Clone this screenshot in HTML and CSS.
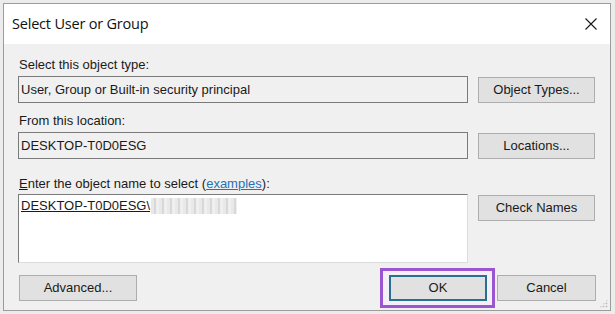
FILE: index.html
```html
<!DOCTYPE html>
<html>
<head>
<meta charset="utf-8">
<link rel="stylesheet" href="styles.css">
</head>
<body>
<div class="window">
  <div class="titlebar">
    <span class="title">Select User or Group</span>
    <svg class="close" width="12" height="12" viewBox="0 0 12 12"><path d="M0.5 0.5 L11.5 11.5 M11.5 0.5 L0.5 11.5" stroke="#1a1a1a" stroke-width="1.1" fill="none"/></svg>
  </div>
  <div class="content">
    <div class="label first">Select this object type:</div>
    <div class="row">
      <div class="field">User, Group or Built-in security principal</div>
      <div class="btn">Object Types...</div>
    </div>
    <div class="label second">From this location:</div>
    <div class="row">
      <div class="field">DESKTOP-T0D0ESG</div>
      <div class="btn">Locations...</div>
    </div>
    <div class="label third"><u>E</u>nter the object name to select (<a class="link">examples</a>):</div>
    <div class="row">
      <div class="area"><span class="uname">DESKTOP-T0D0ESG\</span><span class="blur"></span></div>
      <div class="btn">Check Names</div>
    </div>
    <div class="bottom">
      <div class="btn adv">Advanced...</div>
      <div class="right">
        <div class="hl"><div class="btn ok">OK</div></div>
        <div class="btn cancel">Cancel</div>
      </div>
    </div>
    <div class="grip"></div>
  </div>
</div>
</body>
</html>
```
FILE: styles.css
```css
html, body {
  margin: 0;
  padding: 0;
}
body {
  width: 615px;
  height: 314px;
  overflow: hidden;
  background: #ececec;
  font-family: "Liberation Sans", Arial, sans-serif;
  font-size: 13px;
  color: #1a1a1a;
}
.window {
  margin: 3px 0 0 3px;
  width: 606px;
  border: 1px solid #9c9c9c;
  background: #f0f0f0;
  position: relative;
}
.titlebar {
  height: 40px;
  background: #ffffff;
  display: flex;
  align-items: center;
  justify-content: space-between;
  padding: 0 13px 0 8px;
}
.title {
  font-family: "Open Sans", "Noto Sans", sans-serif;
  font-size: 14.5px;
  color: #111;
  letter-spacing: -0.2px;
  margin-top: -2px;
}
.close {
  margin-top: -1px;
}
.content {
  box-sizing: border-box;
  padding: 13px 14px 0 14px;
  height: 266px;
  position: relative;
}
.label {
  padding-left: 1px;
  height: 15px;
  line-height: 15px;
}
.label.first {
  margin: 0 0 4px 0;
}
.label.second {
  margin: 10px 0 4px 0;
}
.label.third {
  margin: 17px 0 3px 0;
}
.row {
  display: grid;
  grid-template-columns: 450px 117px;
  column-gap: 10px;
  align-items: start;
}
.field {
  box-sizing: border-box;
  height: 27px;
  border: 1px solid #7a7a7a;
  background: #f0f0f0;
  line-height: 25px;
  padding-left: 2px;
}
.btn {
  box-sizing: border-box;
  height: 26px;
  border: 1px solid #adadad;
  background: #e1e1e1;
  text-align: center;
  line-height: 24px;
  margin-top: 1px;
}
.area {
  box-sizing: border-box;
  height: 69px;
  border: 1px solid #7a7a7a;
  border-right-color: #dcdcdc;
  border-bottom-color: #dcdcdc;
  background: #ffffff;
  padding: 3px 0 0 2px;
  display: flex;
  align-items: flex-start;
  line-height: 15px;
}
.uname {
  text-decoration: underline;
}
.blur {
  display: inline-block;
  width: 86px;
  height: 16px;
  margin-left: 1px;
  background: repeating-linear-gradient(90deg, #e9e9e9 0 3px, #d8d8d8 3px 5px, #efefef 5px 8px);
}
.link {
  color: #2a6fb5;
  text-decoration: underline;
}
.bottom {
  display: flex;
  justify-content: space-between;
  align-items: center;
  margin-top: 5px;
}
.adv {
  width: 118px;
  margin-left: 1px;
  margin-top: 0;
}
.right {
  display: flex;
  align-items: center;
  gap: 2px;
}
.hl {
  box-sizing: border-box;
  border: 3px solid #9a55d0;
  padding: 4px 5px 4px 6px;
  background: #f5effa;
}
.ok {
  width: 98px;
  border: 2px solid #2a6e92;
  line-height: 22px;
  margin-top: 0;
}
.cancel {
  width: 99px;
  margin-top: 0;
}
.grip {
  position: absolute;
  right: 2px;
  bottom: 2px;
  width: 9px;
  height: 9px;
  background: radial-gradient(circle, #b8b8b8 0.8px, transparent 1.1px) 0 0 / 3px 3px;
  clip-path: polygon(100% 0, 100% 100%, 0 100%);
}
```
